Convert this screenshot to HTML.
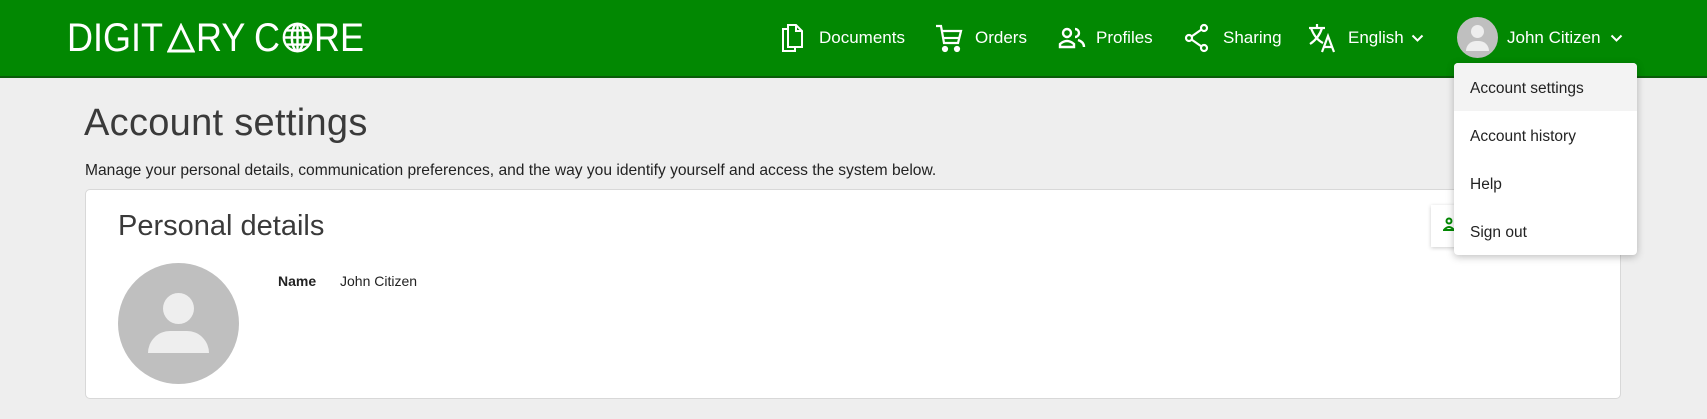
<!DOCTYPE html>
<html><head><meta charset="utf-8"><style>
*{box-sizing:border-box;margin:0;padding:0}
body{width:1707px;height:419px;overflow:hidden;background:#eeeeee;font-family:"Liberation Sans",sans-serif;color:#222;position:relative}
.hdr{position:absolute;left:0;top:0;width:1707px;height:78px;background:#028802;border-bottom:2px solid #0a5c0a}
.lg{position:absolute;top:18px;color:#fff;font-size:40px;line-height:40px;white-space:nowrap;transform:scaleX(0.9);transform-origin:left top}
.n{position:absolute;color:#fff;font-size:17px;top:28px;white-space:nowrap}
.ic{position:absolute;top:23px}
.t{position:absolute;font-size:15.5px;white-space:nowrap}
</style></head><body>
<div class="hdr">
<div class="lg" style="left:67px">DIGIT</div>
<svg style="position:absolute;left:167px;top:23px" width="28" height="30" viewBox="0 0 28 30"><path d="M14 3 L26 28 L2 28 Z" fill="none" stroke="#fff" stroke-width="3"/></svg>
<div class="lg" style="left:196px">RY</div>
<div class="lg" style="left:254px">C</div>
<svg style="position:absolute;left:282px;top:22px" width="31" height="31" viewBox="0 0 33 33" fill="none" stroke="#fff" stroke-width="2.6"><circle cx="16.5" cy="16.5" r="14.5"/><ellipse cx="16.5" cy="16.5" rx="6" ry="14.5"/><line x1="2" y1="16.5" x2="31" y2="16.5"/><line x1="16.5" y1="2" x2="16.5" y2="31"/><line x1="5" y1="9" x2="28" y2="9"/><line x1="5" y1="24" x2="28" y2="24"/></svg>
<div class="lg" style="left:314px">RE</div>

<svg class="ic" style="left:780px" width="26" height="30" viewBox="0 0 26 30" fill="none" stroke="#fff" stroke-width="2"><path d="M8 6 H3 V28 H15 V24"/><path d="M8 2 H16 L22 8 V24 H8 Z"/><path d="M16 2 V8 H22"/></svg>
<div class="n" style="left:819px">Documents</div>
<svg class="ic" style="left:935px" width="28" height="30" viewBox="0 0 28 30" fill="none" stroke="#fff" stroke-width="2.2"><path d="M1 3 H6 L9 20 H23 L26 8 H7"/><circle cx="10" cy="26" r="2" fill="#fff"/><circle cx="22" cy="26" r="2" fill="#fff"/><line x1="9" y1="15" x2="24" y2="15"/></svg>
<div class="n" style="left:975px">Orders</div>
<svg class="ic" style="left:1058px;top:27px" width="28" height="22" viewBox="0 0 28 22" fill="none" stroke="#fff" stroke-width="2.4"><circle cx="9" cy="6" r="4"/><path d="M2 20 V17 Q9 11 16 17 V20 Z"/><path d="M17 2 A4 4 0 0 1 17 10"/><path d="M20 13 Q26 15 26 20"/></svg>
<div class="n" style="left:1096px">Profiles</div>
<svg class="ic" style="left:1184px" width="26" height="30" viewBox="0 0 26 30" fill="none" stroke="#fff" stroke-width="2.2"><circle cx="20" cy="5" r="3"/><circle cx="5" cy="15" r="3"/><circle cx="20" cy="25" r="3"/><line x1="7.5" y1="13.5" x2="17.5" y2="6.5"/><line x1="7.5" y1="16.5" x2="17.5" y2="23.5"/></svg>
<div class="n" style="left:1223px">Sharing</div>
<svg class="ic" style="left:1307px" width="30" height="30" viewBox="0 0 30 30" fill="none" stroke="#fff" stroke-width="2.2"><line x1="2" y1="5" x2="18" y2="5"/><line x1="10" y1="1" x2="10" y2="5"/><path d="M4 5 Q8 16 16 20"/><path d="M15 5 Q12 15 3 21"/><path d="M15 29 L21 13 L27 29 M17 24 H25"/></svg>
<div class="n" style="left:1348px">English</div>
<svg style="position:absolute;left:1411px;top:34px" width="13" height="9" viewBox="0 0 13 9"><path d="M1.5 1.5 L6.5 6.5 L11.5 1.5" fill="none" stroke="#fff" stroke-width="2"/></svg>
<div style="position:absolute;left:1457px;top:17px;width:41px;height:41px;border-radius:50%;background:#bfbfbf;overflow:hidden">
<div style="position:absolute;left:14px;top:8px;width:13px;height:13px;border-radius:50%;background:#eee"></div>
<div style="position:absolute;left:9px;top:24px;width:23px;height:10px;border-radius:11px 11px 0 0;background:#eee"></div></div>
<div class="n" style="left:1507px">John Citizen</div>
<svg style="position:absolute;left:1610px;top:34px" width="13" height="9" viewBox="0 0 13 9"><path d="M1.5 1.5 L6.5 6.5 L11.5 1.5" fill="none" stroke="#fff" stroke-width="2"/></svg>
</div>

<div style="position:absolute;left:84px;top:102px;font-size:38px;font-weight:300;color:#3a3a3a;letter-spacing:0.3px">Account settings</div>
<div class="t" style="left:85px;top:162px;font-size:15.6px">Manage your personal details, communication preferences, and the way you identify yourself and access the system below.</div>

<div style="position:absolute;left:85px;top:189px;width:1536px;height:210px;background:#fff;border:1px solid #d8d8d8;border-radius:5px">
<div style="position:absolute;left:32px;top:20px;font-size:29px;font-weight:300;color:#3a3a3a">Personal details</div>
<div style="position:absolute;left:32px;top:73px;width:121px;height:121px;border-radius:50%;background:#bfbfbf;overflow:hidden">
<div style="position:absolute;left:45px;top:30px;width:31px;height:31px;border-radius:50%;background:#eee"></div>
<div style="position:absolute;left:30px;top:68px;width:61px;height:22px;border-radius:30px 30px 0 0;background:#eee"></div></div>
<div class="t" style="left:192px;top:83px;font-size:14px;font-weight:bold">Name</div>
<div class="t" style="left:254px;top:83px;font-size:14px">John Citizen</div>
<div style="position:absolute;left:1345px;top:15px;width:40px;height:42px;background:#fff;box-shadow:0 1px 4px rgba(0,0,0,.2)"><svg style="position:absolute;left:12px;top:12px" width="14" height="14" viewBox="0 0 14 14" fill="none" stroke="#028802" stroke-width="2"><circle cx="6" cy="4" r="2.5"/><path d="M1 13 Q6 7 11 13 Z"/></svg></div>
</div>

<div style="position:absolute;left:1454px;top:63px;width:183px;height:192px;background:#fff;border-radius:4px;box-shadow:0 2px 8px rgba(0,0,0,.25);overflow:hidden">
<div style="height:48px;background:#f3f3f3"></div>
<div class="t" style="left:16px;top:17px">Account settings</div>
<div class="t" style="left:16px;top:65px">Account history</div>
<div class="t" style="left:16px;top:113px">Help</div>
<div class="t" style="left:16px;top:161px">Sign out</div>
</div>
</body></html>
